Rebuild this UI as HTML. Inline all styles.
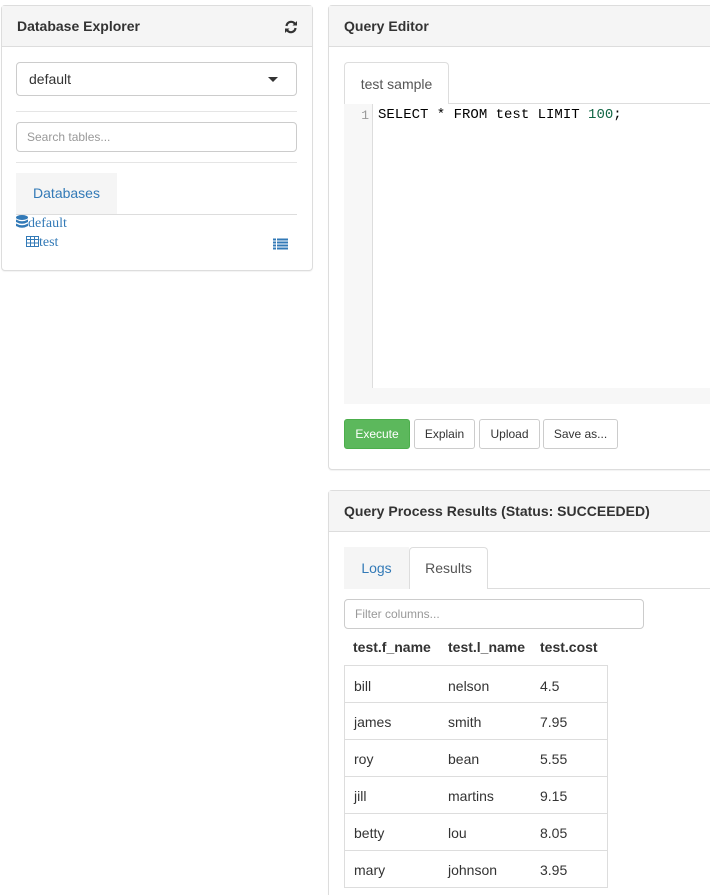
<!DOCTYPE html>
<html><head><meta charset="utf-8"><style>
*{box-sizing:border-box;margin:0;padding:0}
html,body{width:710px;height:895px;overflow:hidden}
body{background:#fff;font-family:"Liberation Sans",sans-serif;font-size:14px;color:#333;position:relative}
.a{position:absolute}
.panel{position:absolute;border:1px solid #ddd;border-radius:4px;background:#fff;box-shadow:0 1px 1px rgba(0,0,0,.05)}
.ph{position:absolute;left:0;right:0;top:0;height:41px;background:#f5f5f5;border-bottom:1px solid #ddd;font-weight:bold;font-size:14px;padding:12px 15px}
.inp{position:absolute;border:1px solid #ccc;border-radius:4px;background:#fff}
.btn{position:absolute;top:419px;height:30px;border:1px solid #ccc;border-radius:3px;background:#fff;font-size:12px;text-align:center;line-height:28px;color:#333}
.hr{position:absolute;height:1px;background:#e5e5e5}
.row{position:absolute;left:344px;width:264px;height:37px;border:1px solid #ddd;border-top:none}
.row span{position:absolute;top:11px}
</style></head><body>
<div class="panel" style="left:1px;top:5px;width:312px;height:266px">
 <div class="ph">Database Explorer
  <svg class="a" style="right:14px;top:14px" width="14" height="14" viewBox="0 0 14 14"><path d="M2.5 6A4.6 4.6 0 0 1 11 4" stroke="#333" stroke-width="2.2" fill="none"/><path d="M8.5 5.5L13 5.5 13 1Z" fill="#333"/><path d="M11.5 8A4.6 4.6 0 0 1 3 10" stroke="#333" stroke-width="2.2" fill="none"/><path d="M5.5 8.5L1 8.5 1 13Z" fill="#333"/></svg>
 </div>
</div>
<div class="inp" style="left:16px;top:62px;width:281px;height:34px;padding:8px 12px">default<div class="a" style="right:18px;top:14px;border-left:5px solid transparent;border-right:5px solid transparent;border-top:5px solid #333"></div></div>
<div class="hr" style="left:16px;top:111px;width:281px"></div>
<div class="inp" style="left:16px;top:122px;width:281px;height:30px;padding:7px 10px;font-size:12px;color:#999">Search tables...</div>
<div class="hr" style="left:16px;top:162px;width:281px"></div>
<div class="a" style="left:16px;top:173px;width:101px;height:41px;background:#f5f5f5;color:#337ab7;text-align:center;line-height:41px">Databases</div>
<div class="hr" style="left:16px;top:214px;width:281px;background:#ddd"></div>
<div class="a" style="left:16px;top:215px;font-family:'Liberation Serif',serif;color:#337ab7;font-size:14px"><svg width="12" height="14" viewBox="0 0 12 14" style="vertical-align:-2px"><ellipse cx="6" cy="2.5" rx="6" ry="2.5" fill="#337ab7"/><path d="M0 4.5Q6 8 12 4.5V7Q6 10.5 0 7Z M0 8.5Q6 12 12 8.5V11Q6 14.5 0 11Z" fill="#337ab7"/></svg>default</div>
<div class="a" style="left:26px;top:235px;font-family:'Liberation Serif',serif;color:#337ab7;font-size:14px"><svg width="13" height="11" viewBox="0 0 13 11" style="vertical-align:-1px"><rect x=".5" y=".5" width="12" height="10" fill="none" stroke="#337ab7"/><path d="M0 3.5H13M0 7H13M4.5 0V11M8.5 0V11" stroke="#337ab7"/></svg>test</div>
<svg class="a" style="left:273px;top:238px" width="15" height="12" viewBox="0 0 15 12"><path d="M0 1.5H3M4 1.5H15M0 4.5H3M4 4.5H15M0 7.5H3M4 7.5H15M0 10.5H3M4 10.5H15" stroke="#337ab7" stroke-width="2"/></svg>

<div class="panel" style="left:328px;top:5px;width:390px;height:465px"><div class="ph">Query Editor</div></div>
<div class="a" style="left:344px;top:62px;width:105px;height:42px;border:1px solid #ddd;border-bottom:none;border-radius:4px 4px 0 0;background:#fff;text-align:center;line-height:42px;color:#555">test sample</div>
<div class="hr" style="left:449px;top:103px;width:261px;background:#ddd"></div>
<div class="a" style="left:344px;top:104px;width:366px;height:300px;background:#f7f7f7"></div>
<div class="a" style="left:372px;top:104px;width:1px;height:284px;background:#ddd"></div>
<div class="a" style="left:373px;top:104px;width:337px;height:284px;background:#fff"></div>
<div class="a" style="left:344px;top:108px;width:25px;text-align:right;font-family:'Liberation Mono',monospace;font-size:13px;color:#999">1</div>
<div class="a" style="left:378px;top:107px;font-family:'Liberation Mono',monospace;font-size:14px;color:#000">SELECT * FROM test LIMIT <span style="color:#164">100</span>;</div>
<div class="btn" style="left:344px;width:66px;background:#5cb85c;border-color:#4cae4c;color:#fff">Execute</div>
<div class="btn" style="left:414px;width:61px">Explain</div>
<div class="btn" style="left:479px;width:61px">Upload</div>
<div class="btn" style="left:543px;width:75px">Save as...</div>

<div class="panel" style="left:328px;top:490px;width:390px;height:420px"><div class="ph">Query Process Results (Status: SUCCEEDED)</div></div>
<div class="a" style="left:344px;top:547px;width:65px;height:42px;background:#f5f5f5;color:#337ab7;text-align:center;line-height:42px">Logs</div>
<div class="a" style="left:409px;top:547px;width:79px;height:42px;border:1px solid #ddd;border-bottom:none;border-radius:4px 4px 0 0;background:#fff;text-align:center;line-height:40px;color:#555">Results</div>
<div class="hr" style="left:488px;top:588px;width:222px;background:#ddd"></div>
<div class="inp" style="left:344px;top:599px;width:300px;height:30px;padding:7px 10px;font-size:12px;color:#999">Filter columns...</div>
<div class="a" style="left:353px;top:639px;font-weight:bold">test.f_name</div>
<div class="a" style="left:448px;top:639px;font-weight:bold">test.l_name</div>
<div class="a" style="left:540px;top:639px;font-weight:bold">test.cost</div>
<div class="row" style="top:665px;border-top:1px solid #ddd;height:38px"><span style="left:9px;top:12px">bill</span><span style="left:103px;top:12px">nelson</span><span style="left:195px;top:12px">4.5</span></div>
<div class="row" style="top:703px"><span style="left:9px">james</span><span style="left:103px">smith</span><span style="left:195px">7.95</span></div>
<div class="row" style="top:740px"><span style="left:9px">roy</span><span style="left:103px">bean</span><span style="left:195px">5.55</span></div>
<div class="row" style="top:777px"><span style="left:9px">jill</span><span style="left:103px">martins</span><span style="left:195px">9.15</span></div>
<div class="row" style="top:814px"><span style="left:9px">betty</span><span style="left:103px">lou</span><span style="left:195px">8.05</span></div>
<div class="row" style="top:851px"><span style="left:9px">mary</span><span style="left:103px">johnson</span><span style="left:195px">3.95</span></div>
</body></html>
